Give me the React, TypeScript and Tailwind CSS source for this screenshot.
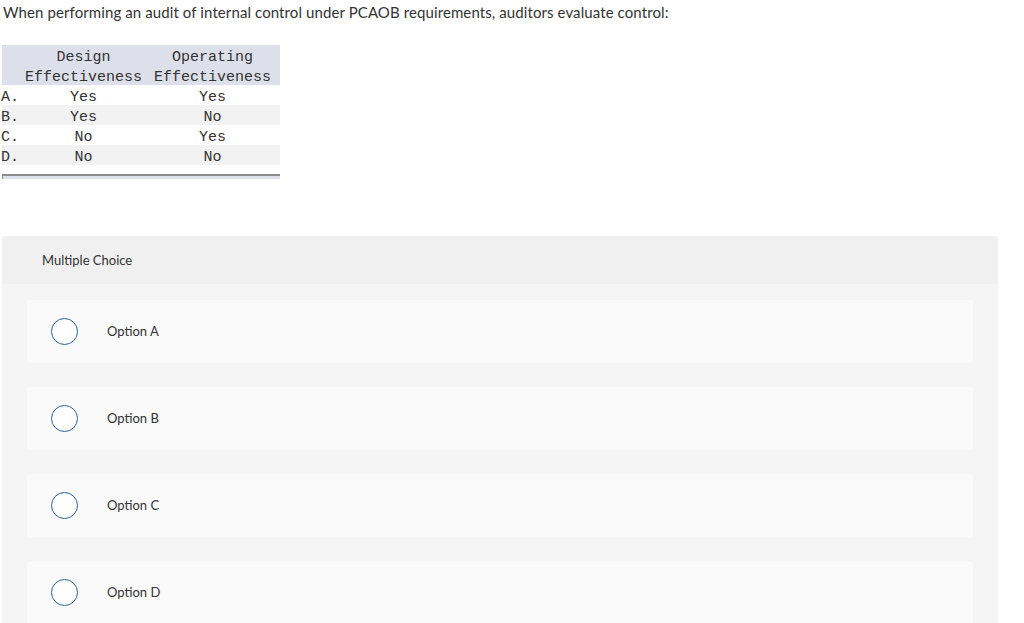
import React from 'react'

const rows = [
  { key: 'A.', design: 'Yes', operating: 'Yes' },
  { key: 'B.', design: 'Yes', operating: 'No' },
  { key: 'C.', design: 'No', operating: 'Yes' },
  { key: 'D.', design: 'No', operating: 'No' },
]

const options = ['Option A', 'Option B', 'Option C', 'Option D']

function ChoiceTable() {
  return (
    <div className="ml-[2px] mt-[24px] w-[278px] font-['Liberation_Mono',monospace] text-[15px] leading-[20px] text-[#333]">
      <div className="grid h-[40px] grid-cols-[20px_123px_135px] bg-[#dde0ea] pt-[3px]">
        <div />
        <div className="text-center">
          Design
          <br />
          Effectiveness
        </div>
        <div className="text-center">
          Operating
          <br />
          Effectiveness
        </div>
      </div>
      {rows.map((r, i) => (
        <div
          key={r.key}
          className={`grid h-[20px] grid-cols-[20px_123px_135px] pt-[3px] ${i % 2 === 1 ? 'bg-[#f2f2f2]' : 'bg-white'}`}
        >
          <div className="-ml-[1px]">{r.key}</div>
          <div className="text-center">{r.design}</div>
          <div className="text-center">{r.operating}</div>
        </div>
      ))}
      <div className="mt-[9px] h-[5px] border-t-2 border-l border-[#8c8c8c] bg-[#dde0ea]" />
    </div>
  )
}

function Radio() {
  return <span className="block h-[27px] w-[27px] rounded-full border-[1.5px] border-[#2a5f96] bg-white" />
}

export default function App() {
  return (
    <div className="min-h-screen bg-white font-['Lato','Liberation_Sans',sans-serif] text-[#333]">
      <p className="pl-[3px] pt-[3px] text-[15px] leading-[18px] tracking-[0.1px]">
        When performing an audit of internal control under PCAOB requirements, auditors evaluate control:
      </p>
      <ChoiceTable />
      <section className="ml-[2px] mt-[57px] w-[996px] overflow-hidden rounded-t-[3px] bg-[#f5f5f5]">
        <div className="flex h-[48px] items-center bg-[#f0f0f0] pl-[40px] pt-[2px] text-[13px] text-[#333]">
          Multiple Choice
        </div>
        <div className="flex flex-col gap-[24px] px-[25px] pt-[16px]">
          {options.map((o) => (
            <div key={o} className="flex h-[63px] items-center rounded-[3px] bg-[#fafafa] pl-[24px]">
              <Radio />
              <span className="ml-[29px] text-[13px] text-[#333]">{o}</span>
            </div>
          ))}
        </div>
      </section>
    </div>
  )
}
